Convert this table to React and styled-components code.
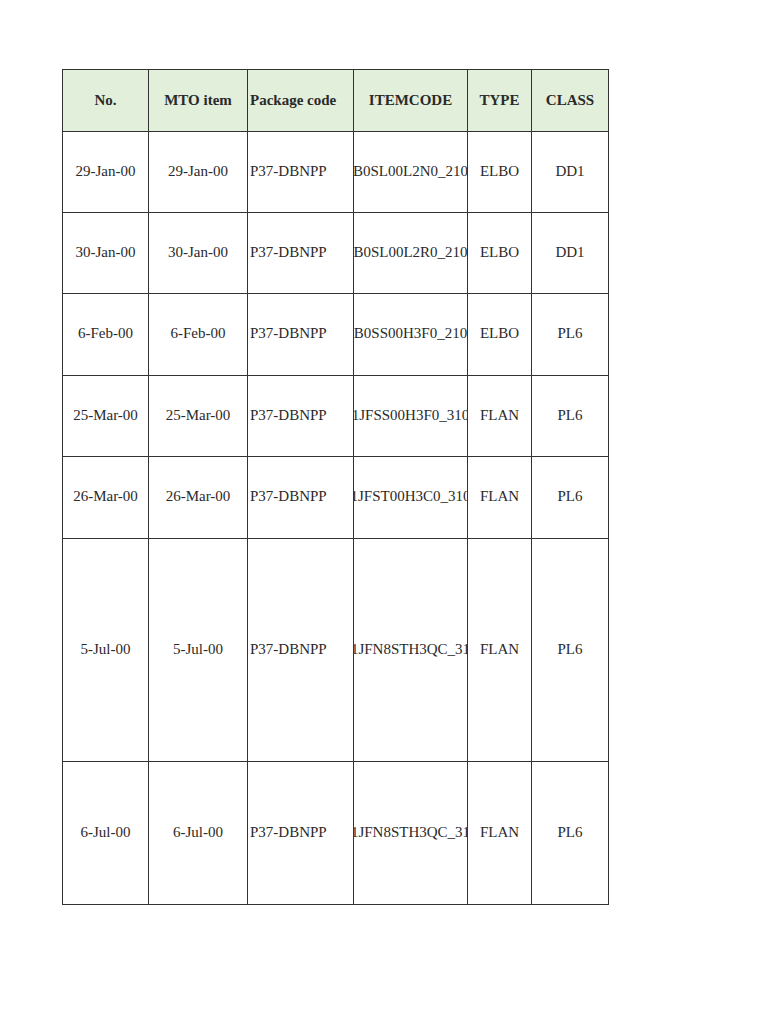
import React from 'react';
import styled, { createGlobalStyle } from 'styled-components';

const GlobalStyle = createGlobalStyle`
  html, body {
    margin: 0;
    background: #fff;
  }
`;

const Page = styled.div`
  padding: 69px 0 0 62px;
`;

const Sheet = styled.table`
  border-collapse: collapse;
  table-layout: fixed;
  width: 547px;
  font-family: "Liberation Serif", "DejaVu Serif", serif;
  font-size: 15px;
  color: #2a2a2a;
`;

const HeadCell = styled.th`
  height: 61px;
  padding: 0;
  background: #e2efda;
  border: 1px solid #333;
  font-weight: bold;
  font-size: 15px;
  text-align: center;
  vertical-align: middle;
  white-space: nowrap;
`;

const Cell = styled.td`
  height: ${p => p.h - 1}px;
  padding: 0;
  border: 1px solid #333;
  vertical-align: middle;
  white-space: nowrap;
`;

const CellText = styled.div`
  display: flex;
  justify-content: ${p => (p.left ? 'flex-start' : 'center')};
  padding-left: ${p => (p.left ? '2px' : '0')};
  overflow: hidden;
  transform: translateY(${p => p.shift}px);
`;

const columns = [
  { label: 'No.', width: 86 },
  { label: 'MTO item', width: 99 },
  { label: 'Package code', width: 106, left: true },
  { label: 'ITEMCODE', width: 114 },
  { label: 'TYPE', width: 64 },
  { label: 'CLASS', width: 77 },
];

const rows = [
  { h: 81, no: '29-Jan-00', code: 'B0SL00L2N0_210', type: 'ELBO', cls: 'DD1' },
  { h: 81, no: '30-Jan-00', code: 'B0SL00L2R0_210', type: 'ELBO', cls: 'DD1' },
  { h: 82, no: '6-Feb-00', code: 'B0SS00H3F0_210', type: 'ELBO', cls: 'PL6' },
  { h: 81, no: '25-Mar-00', code: '1JFSS00H3F0_310', type: 'FLAN', cls: 'PL6' },
  { h: 82, no: '26-Mar-00', code: '1JFST00H3C0_310', type: 'FLAN', cls: 'PL6' },
  { h: 223, no: '5-Jul-00', code: '1JFN8STH3QC_31', type: 'FLAN', cls: 'PL6' },
  { h: 143, no: '6-Jul-00', code: '1JFN8STH3QC_31', type: 'FLAN', cls: 'PL6' },
];

export default function App() {
  return (
    <Page>
      <GlobalStyle />
      <Sheet>
        <colgroup>
          {columns.map(c => (
            <col key={c.label} style={{ width: c.width }} />
          ))}
        </colgroup>
        <thead>
          <tr>
            {columns.map(c => (
              <HeadCell key={c.label}>
                <CellText left={c.left} shift={0}>{c.label}</CellText>
              </HeadCell>
            ))}
          </tr>
        </thead>
        <tbody>
          {rows.map((r, i) => {
            const values = [r.no, r.no, 'P37-DBNPP', r.code, r.type, r.cls];
            return (
              <tr key={i}>
                {values.map((v, j) => (
                  <Cell key={j} h={r.h}>
                    <CellText left={columns[j].left} shift={-1}>{v}</CellText>
                  </Cell>
                ))}
              </tr>
            );
          })}
        </tbody>
      </Sheet>
    </Page>
  );
}
